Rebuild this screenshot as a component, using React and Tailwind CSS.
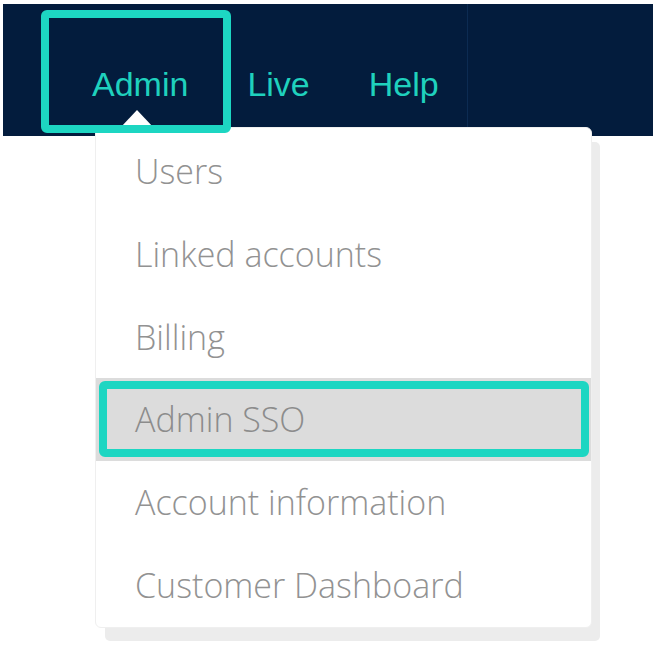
const menuItems = [
  "Users",
  "Linked accounts",
  "Billing",
  "Admin SSO",
  "Account information",
  "Customer Dashboard",
]

export default function App() {
  return (
    <div className="relative h-[648px] w-[657px] overflow-hidden bg-white">
      {/* top navigation */}
      <nav className="ml-[3px] mt-[4px] flex h-[132px] w-[650px] bg-[#031c3d]">
        <div className="flex h-full w-[465px] gap-[59px] border-r border-[#0c2b52] pl-[89px] pt-[63px] font-['Liberation_Sans',Arial,sans-serif] text-[34px] leading-none text-[#1fd1bd]">
          <span>Admin</span>
          <span>Live</span>
          <span>Help</span>
        </div>
      </nav>

      {/* dropdown */}
      <div className="absolute left-[95px] top-[127px] flex h-[501px] w-[497px] flex-col rounded-[6px] border border-[#efefef] bg-white pt-[2px] font-['Open_Sans','Noto_Sans',sans-serif] text-[34px] font-light shadow-[9px_14px_0_-1px_#ececec]">
        {menuItems.map((item) =>
          item === "Admin SSO" ? (
            <div key={item} className="relative flex h-[83px] items-center bg-[#dcdcdc] pl-[39px] text-[#8c8c8c]">
              {item}
              <div className="absolute bottom-[4px] left-[3px] right-[2px] top-[3px] rounded-[6px] border-[8px] border-[#1dd6c2]" />
            </div>
          ) : (
            <div key={item} className="flex h-[83px] items-center pl-[39px] text-[#929292]">
              {item}
            </div>
          )
        )}
      </div>

      {/* caret */}
      <div className="absolute left-[121px] top-[110px] h-0 w-0 border-b-[17px] border-l-[16px] border-r-[16px] border-b-white border-l-transparent border-r-transparent" />

      {/* highlight around Admin */}
      <div className="absolute left-[41px] top-[10px] h-[123px] w-[190px] rounded-[6px] border-[8px] border-[#1dd6c2]" />
    </div>
  )
}
